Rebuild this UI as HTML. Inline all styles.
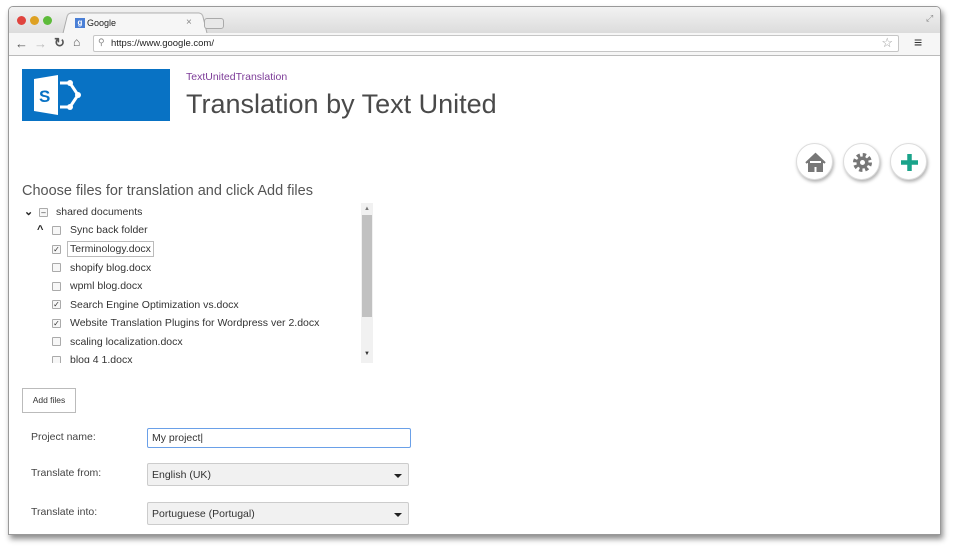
<!DOCTYPE html>
<html><head><meta charset="utf-8"><style>
*{box-sizing:border-box;margin:0;padding:0}
body{width:954px;height:551px;background:#fff;position:relative;overflow:hidden;font-family:"Liberation Sans",sans-serif}
.win{position:absolute;left:8px;top:6px;width:933px;height:529px;border:1px solid #999;border-radius:5px 5px 0 0;box-shadow:2px 4px 6px rgba(0,0,0,.45);background:#fff;overflow:hidden}
.tabbar{position:absolute;left:0;top:0;width:100%;height:26px;background:linear-gradient(#f2f2f2,#dcdcdc)}
.dot{position:absolute;top:9px;width:9px;height:9px;border-radius:50%}
.tab{position:absolute;left:56px;top:5px;width:140px;height:22px;background:#f6f6f6;border:1px solid #aaa;border-bottom:none;border-radius:4px 4px 0 0;transform:perspective(40px) rotateX(8deg);}
.tabt{position:absolute;left:78px;top:11px;font-size:9px;color:#222}
.toolbar{position:absolute;left:0;top:26px;width:100%;height:23px;background:#f6f6f6;border-bottom:1px solid #bbb}
.url{position:absolute;left:84px;top:2px;width:806px;height:17px;background:#fff;border:1px solid #c6c6c6;border-radius:2px;font-size:9.5px;color:#222;padding:2px 0 0 17px}
.t{position:absolute;white-space:nowrap;color:#333}
.cb{position:absolute;width:9px;height:9px;border:1px solid #aaa;background:#f7f7f7;border-radius:1px;font-size:8px;line-height:7px;text-align:center;color:#333}
.fi{font-size:10.5px;color:#333;position:absolute;white-space:nowrap}
.sel{position:absolute;left:138px;width:262px;height:23px;border:1px solid #ccc;background:#f1f1f1;border-radius:2px;font-size:10.5px;padding:5px 4px;color:#333}
.sel:after{content:"";position:absolute;right:6px;top:10px;border:4px solid transparent;border-top:4px solid #222}
.lab{position:absolute;left:22px;font-size:10.5px;color:#444}
.cbtn{position:absolute;top:136px;width:37px;height:37px;border-radius:50%;background:#fff;border:1px solid #ddd;box-shadow:1px 2px 3px rgba(0,0,0,.3)}
</style></head><body>
<div class="win">
 <div class="tabbar">
  <div class="dot" style="left:8px;background:#e0443e"></div>
  <div class="dot" style="left:21px;background:#dea123"></div>
  <div class="dot" style="left:34px;background:#5dbb3a"></div>
  <div class="tab"></div>
  <div style="position:absolute;left:66px;top:11px;width:10px;height:10px;background:#4a7fd6;color:#fff;font-size:8px;line-height:10px;text-align:center;font-weight:bold">g</div>
  <div class="tabt">Google</div>
  <div class="t" style="left:177px;top:10px;font-size:10px;color:#888">×</div>
  <div style="position:absolute;left:195px;top:11px;width:20px;height:11px;border:1px solid #aaa;border-radius:3px;background:#e8e8e8"></div>
  <div class="t" style="left:917px;top:6px;font-size:9px;color:#888">⤢</div>
 </div>
 <div class="toolbar">
  <div class="t" style="left:6px;top:3px;font-size:13px;color:#555;font-weight:bold">←</div>
  <div class="t" style="left:25px;top:3px;font-size:13px;color:#bbb;font-weight:bold">→</div>
  <div class="t" style="left:45px;top:2px;font-size:13px;color:#555;font-weight:bold">↻</div>
  <div class="t" style="left:64px;top:2px;font-size:12px;color:#555">⌂</div>
  <div class="url"><span style="position:absolute;left:4px;top:1px;color:#888;font-size:9px">⚲</span>https://www.google.com/<span style="position:absolute;right:5px;top:-1px;color:#999;font-size:13px">☆</span></div>
  <div class="t" style="left:905px;top:1px;font-size:14px;color:#333;font-weight:bold">≡</div>
 </div>
 <div style="position:absolute;left:13px;top:62px;width:148px;height:52px;background:#0872c4">
  <svg width="148" height="52"><polygon points="12,10 36,6 36,46 12,42" fill="#fff"/><text x="17" y="33" font-size="17" font-weight="bold" fill="#0872c4" font-family="Liberation Sans">S</text><path d="M38 14 L48 14 L56 26 L48 38 L38 38" stroke="#fff" stroke-width="3" fill="none"/><circle cx="48" cy="14" r="3" fill="#fff"/><circle cx="56" cy="26" r="3" fill="#fff"/><circle cx="48" cy="38" r="3" fill="#fff"/></svg>
 </div>
 <div class="t" style="left:177px;top:64px;font-size:10.5px;color:#7d3c98">TextUnitedTranslation</div>
 <div class="t" style="left:177px;top:82px;font-size:27px;color:#4a4a4a">Translation by Text United</div>
 <div class="cbtn" style="left:787px"><svg width="37" height="37"><path d="M9 19 L18.5 10 L28 19 M12 17 V27 H16.5 V22 H20.5 V27 H25 V17" fill="#777" stroke="#777" stroke-width="2"/></svg></div>
 <div class="cbtn" style="left:834px"><svg width="37" height="37"><circle cx="18.5" cy="18.5" r="7" fill="none" stroke="#777" stroke-width="5" stroke-dasharray="3 2.5"/><circle cx="18.5" cy="18.5" r="6" fill="#777"/><circle cx="18.5" cy="18.5" r="2.5" fill="#fff"/></svg></div>
 <div class="cbtn" style="left:881px"><svg width="37" height="37"><path d="M18.5 10 V27 M10 18.5 H27" stroke="#1aa38a" stroke-width="4.5"/></svg></div>

 <div class="t" style="left:13px;top:176px;font-size:14.5px;color:#555">Choose files for translation and click Add files</div>
 <div style="position:absolute;left:352px;top:196px;width:12px;height:160px;background:#f1f1f1"><div style="position:absolute;left:1px;top:12px;width:10px;height:102px;background:#c1c1c1"></div><div style="position:absolute;left:3px;top:3px;font-size:6px;color:#777">▲</div><div style="position:absolute;left:3px;top:148px;font-size:6px;color:#333">▼</div></div>
 <div class="t" style="left:15px;top:198px;font-size:11px;color:#222;font-weight:bold">⌄</div>
 <div class="cb" style="left:30px;top:201px">–</div>
 <div class="fi" style="left:47px;top:199px">shared documents</div>
 <div class="t" style="left:28px;top:217px;font-size:11px;color:#222;font-weight:bold">^</div>
 <div class="cb" style="left:43px;top:219px"></div><div class="fi" style="left:61px;top:217px">Sync back folder</div>
 <div class="cb" style="left:43px;top:238px">✓</div><div class="fi" style="left:58px;top:234px;border:1px solid #bbb;padding:1px 2px">Terminology.docx</div>
 <div class="cb" style="left:43px;top:256px"></div><div class="fi" style="left:61px;top:255px">shopify blog.docx</div>
 <div class="cb" style="left:43px;top:275px"></div><div class="fi" style="left:61px;top:273px">wpml blog.docx</div>
 <div class="cb" style="left:43px;top:293px">✓</div><div class="fi" style="left:61px;top:292px">Search Engine Optimization vs.docx</div>
 <div class="cb" style="left:43px;top:312px">✓</div><div class="fi" style="left:61px;top:310px">Website Translation Plugins for Wordpress ver 2.docx</div>
 <div class="cb" style="left:43px;top:330px"></div><div class="fi" style="left:61px;top:329px">scaling localization.docx</div>
 <div style="position:absolute;left:40px;top:346px;width:320px;height:10px;overflow:hidden"><div class="cb" style="left:3px;top:3px"></div><div class="fi" style="left:21px;top:1px">blog 4 1.docx</div></div>

 <div style="position:absolute;left:13px;top:381px;width:54px;height:25px;border:1px solid #bbb;font-size:8.5px;color:#333;text-align:center;line-height:23px">Add files</div>
 <div class="lab" style="top:424px">Project name:</div>
 <div style="position:absolute;left:138px;top:421px;width:264px;height:20px;border:1px solid #6aa0e8;border-radius:2px;font-size:10.5px;color:#333;padding:3px 4px">My project|</div>
 <div class="lab" style="top:460px">Translate from:</div>
 <div class="sel" style="top:456px">English (UK)</div>
 <div class="lab" style="top:499px">Translate into:</div>
 <div class="sel" style="top:495px">Portuguese (Portugal)</div>
</div>
</body></html>
